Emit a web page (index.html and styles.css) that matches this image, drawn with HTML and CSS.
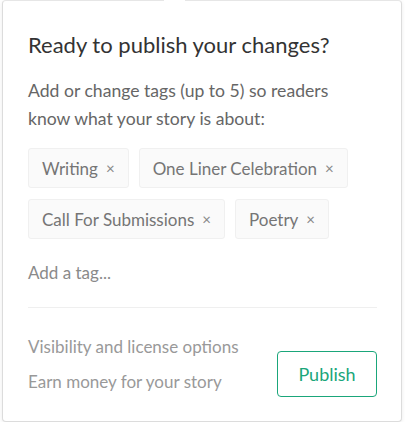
FILE: index.html
```html
<!DOCTYPE html>
<html lang="en">

<head>
    <meta charset="UTF-8">
    <meta name="viewport" content="width=device-width, initial-scale=1.0">
    <title>Publish</title>
    <link rel="stylesheet" href="styles.css">
</head>

<body>
    <div class="popover">
        <h2 class="title">Ready to publish your changes?</h2>
        <p class="hint">Add or change tags (up to 5) so readers know what your story is about:</p>
        <div class="tags">
            <span class="tag">Writing <span class="remove">&times;</span></span>
            <span class="tag">One Liner Celebration <span class="remove">&times;</span></span>
            <span class="tag">Call For Submissions <span class="remove">&times;</span></span>
            <span class="tag">Poetry <span class="remove">&times;</span></span>
        </div>
        <div class="add-tag">Add a tag...</div>
        <div class="footer">
            <div class="options">
                <a href="#">Visibility and license options</a>
                <a href="#">Earn money for your story</a>
            </div>
            <button type="button" class="publish">Publish</button>
        </div>
    </div>
</body>

</html>
```

FILE: styles.css
```css
body {
    margin: 0;
    background-color: #fff;
    font-family: "Source Sans Pro", Lato, "Open Sans", sans-serif;
}

.popover {
    position: relative;
    box-sizing: border-box;
    width: 400px;
    height: 422px;
    margin-left: 2px;
    padding: 28px 24px 0 25px;
    background-color: #fff;
    border: 1px solid #dcdcdc;
    border-top-color: #e6e6e6;
    border-radius: 4px;
    box-shadow: 0 1px 4px rgba(0, 0, 0, 0.08);
}

.popover::before {
    content: "";
    position: absolute;
    top: -1px;
    left: 161px;
    width: 21px;
    height: 2px;
    background-color: #fff;
}

.title {
    margin: 0 0 16px;
    font-size: 22px;
    font-weight: 400;
    line-height: 32px;
    color: #333;
}

.hint {
    max-width: 320px;
    margin: 0 0 15px;
    font-size: 17.6px;
    line-height: 28px;
    color: #666;
}

.tags {
    display: flex;
    flex-wrap: wrap;
    gap: 11px 10px;
}

.tag {
    display: inline-flex;
    align-items: center;
    height: 40px;
    box-sizing: border-box;
    padding: 0 13px 0 13px;
    font-size: 17px;
    color: #757575;
    background-color: #fafafa;
    border: 1px solid #f0f0f0;
    border-radius: 3px;
}

.remove {
    margin-left: 8px;
    font-size: 15px;
    color: #888;
}

.add-tag {
    margin-top: 20px;
    padding-bottom: 20px;
    font-size: 17px;
    line-height: 28px;
    color: #8a8a8a;
    border-bottom: 1px solid #efefef;
}

.footer {
    display: flex;
    align-items: flex-end;
    justify-content: space-between;
    padding-top: 25px;
}

.options {
    display: flex;
    flex-direction: column;
    gap: 7px;
}

.options a {
    font-size: 17px;
    line-height: 28px;
    color: #999;
    text-decoration: none;
}

.publish {
    width: 100px;
    height: 46px;
    margin-bottom: -1px;
    font-family: inherit;
    font-size: 18px;
    color: #1aa67a;
    background-color: #fff;
    border: 1px solid #1aa67a;
    border-radius: 4px;
    cursor: pointer;
}
```
